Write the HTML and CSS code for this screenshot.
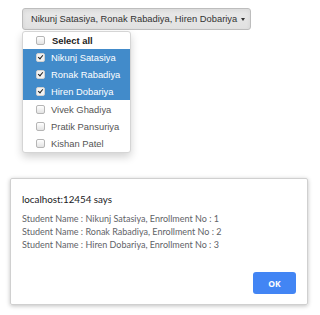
FILE: index.html
```html
<!DOCTYPE html>
<html>
<head>
<meta charset="utf-8">
<link rel="stylesheet" href="styles.css">
</head>
<body>
<div class="page">
  <div class="dropdown">
    <button class="btn">Nikunj Satasiya, Ronak Rabadiya, Hiren Dobariya <span class="caret"></span></button>
    <ul class="menu">
      <li class="item all"><span class="cb"></span>Select all</li>
      <li class="item sel"><span class="cb on"></span>Nikunj Satasiya</li>
      <li class="item sel"><span class="cb on"></span>Ronak Rabadiya</li>
      <li class="item sel"><span class="cb on"></span>Hiren Dobariya</li>
      <li class="item"><span class="cb"></span>Vivek Ghadiya</li>
      <li class="item"><span class="cb"></span>Pratik Pansuriya</li>
      <li class="item"><span class="cb"></span>Kishan Patel</li>
    </ul>
  </div>
  <div class="dialog">
    <div class="title">localhost:12454 says</div>
    <div class="msg">
      <p>Student Name : Nikunj Satasiya, Enrollment No : 1</p>
      <p>Student Name : Ronak Rabadiya, Enrollment No : 2</p>
      <p>Student Name : Hiren Dobariya, Enrollment No : 3</p>
    </div>
    <div class="actions"><button class="ok">OK</button></div>
  </div>
</div>
</body>
</html>
```
FILE: styles.css
```css
html, body { margin: 0; padding: 0; background: #fff; }
.page { width: 320px; height: 315px; position: relative; padding-top: 8px; box-sizing: border-box; }
.dropdown { position: relative; margin-left: 22px; height: 22px; }
.btn {
  font-family: "Liberation Sans", Arial, sans-serif; font-size: 9.35px; color: #333;
  height: 22px; padding: 0 0 0 8px; border: 1px solid #bdbdbd; border-radius: 3px;
  background: linear-gradient(#e9e9e9, #e1e1e1); box-shadow: inset 0 2px 4px rgba(0,0,0,.07);
  display: flex; align-items: center; gap: 4px; width: 229px; box-sizing: border-box; white-space: nowrap;
}
.caret { width: 0; height: 0; border-top: 3px solid #333; border-left: 2.5px solid transparent; border-right: 2.5px solid transparent; margin-top: 1px; }
.menu {
  position: absolute; left: 0; top: 23px; width: 109px; margin: 0; padding: 0; list-style: none;
  background: #fff; border: 1px solid #d5d5d5; border-radius: 3px; box-sizing: border-box;
  box-shadow: 0 4px 8px rgba(0,0,0,.18);
  font-family: "Liberation Sans", Arial, sans-serif; font-size: 9.4px; color: #555;
}
.item { height: 17.3px; display: flex; align-items: center; padding-left: 13px; gap: 6px; }
.item.all { font-weight: bold; color: #222; height: 16.5px; gap: 7px; }
.item.sel { background: #428bca; color: #fff; }
.cb { width: 7px; height: 7px; border: 1px solid #b5b5b5; border-radius: 2px; background: linear-gradient(#fff, #e3e3e3); position: relative; flex: none; }
.cb.on { background: #f2f2f2; border-color: #d0d0d0; }
.cb.on::after { content: ""; position: absolute; left: 2px; top: 0; width: 2px; height: 4px; border: solid #222; border-width: 0 1.5px 1.5px 0; transform: rotate(40deg); }
.dialog {
  margin: 148px 0 0 10px; width: 298px; height: 127px; box-sizing: border-box;
  border: 1px solid #d0d0d0; border-radius: 2px; box-shadow: 0 1px 4px rgba(0,0,0,.25);
  padding: 13px 11px 10px 11px; display: flex; flex-direction: column;
  font-family: Lato, "Open Sans", sans-serif;
}
.title { font-size: 9.8px; color: #202124; line-height: 14px; }
.msg { margin-top: 6px; font-size: 9px; color: #5f6368; line-height: 13px; flex: 1; }
.msg p { margin: 0; }
.actions { display: flex; justify-content: flex-end; }
.ok { width: 43px; height: 22px; border: none; border-radius: 3px; background: #4285f4; color: #fff; font-family: "Open Sans", "Noto Sans", sans-serif; font-size: 8.5px; font-weight: bold; }
```
